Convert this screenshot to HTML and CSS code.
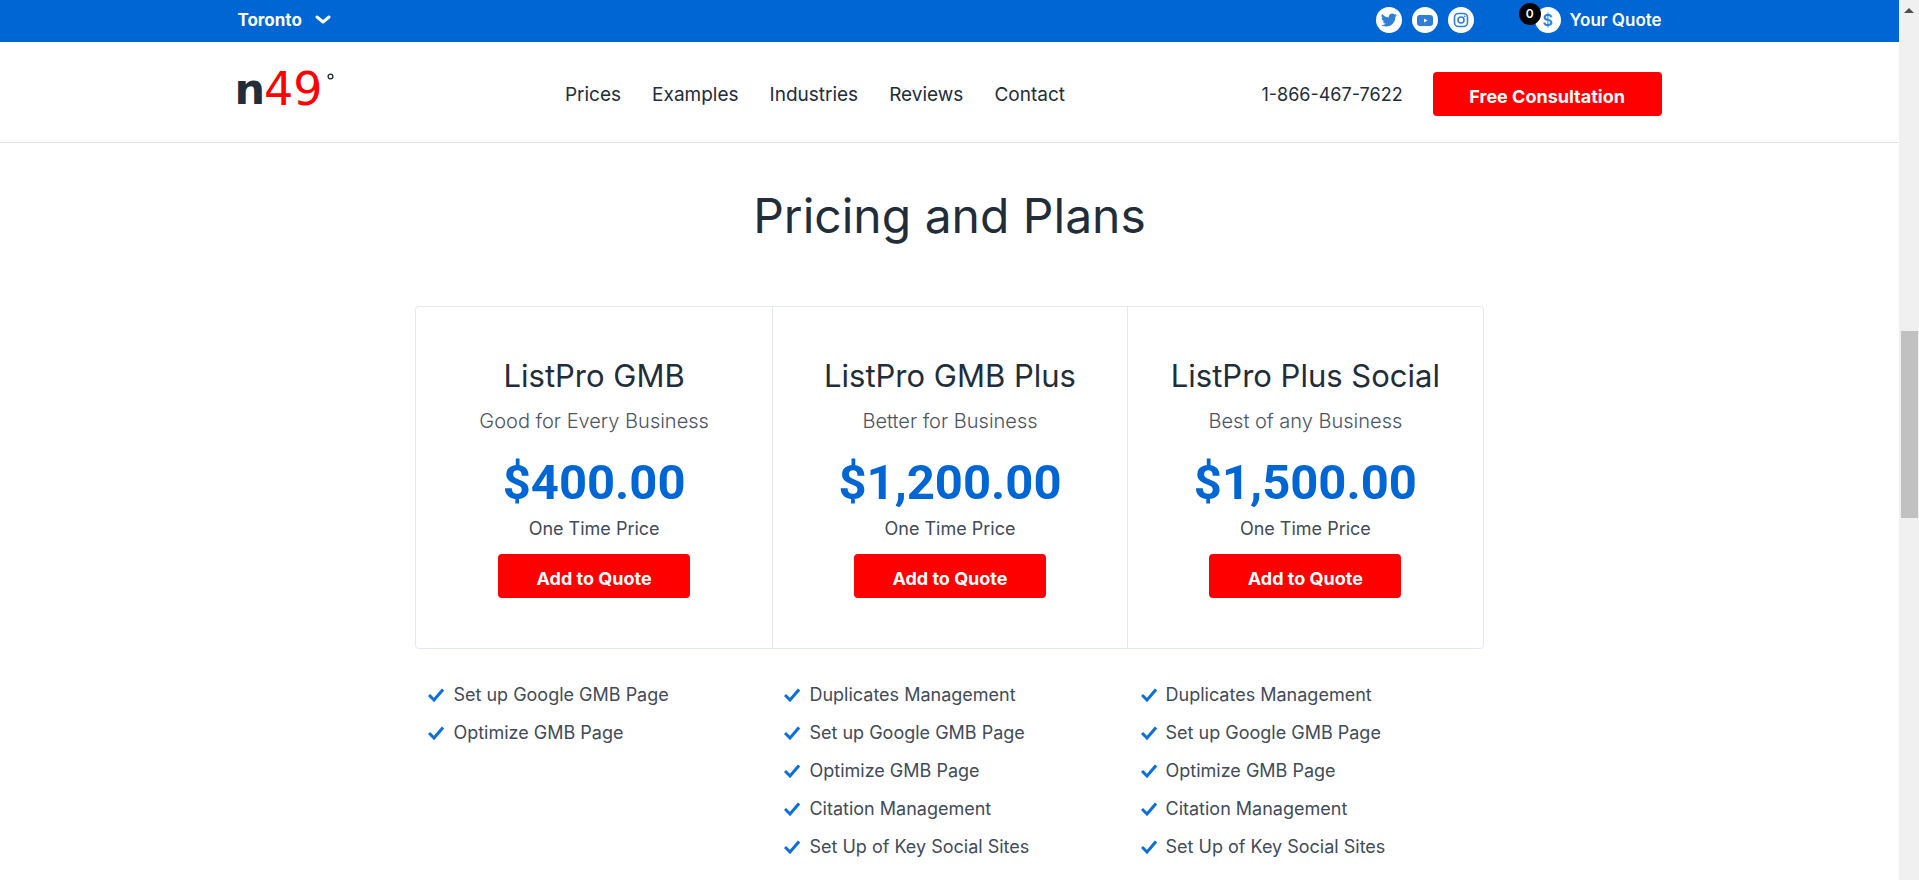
FILE: index.html
```
<!DOCTYPE html>
<html lang="en">
<head>
    <meta charset="utf-8">
    <title>n49 - Pricing and Plans</title>
    <link rel="stylesheet" href="styles.css">
</head>
<body>
    <div class="topbar">
        <div class="container topbar-inner">
            <button class="city-btn" type="button">
                Toronto
                <svg width="16" height="10" viewBox="0 0 16 10"><path d="M2 2l6 5 6-5" fill="none" stroke="#fff" stroke-width="3" stroke-linecap="round" stroke-linejoin="round"/></svg>
            </button>
            <div class="topbar-right">
                <div class="social">
                    <a href="#" aria-label="Twitter">
                        <svg width="16" height="16" viewBox="0 0 24 24"><path fill="#2f7fd8" d="M23.95 4.57a10 10 0 0 1-2.82.77 4.96 4.96 0 0 0 2.16-2.72c-.95.55-2 .95-3.13 1.18a4.92 4.92 0 0 0-8.38 4.48C7.69 8.1 4.07 6.13 1.64 3.16a4.93 4.93 0 0 0 1.52 6.57 4.9 4.9 0 0 1-2.23-.61v.06a4.92 4.92 0 0 0 3.95 4.83 5 5 0 0 1-2.21.08 4.94 4.94 0 0 0 4.6 3.42A9.87 9.87 0 0 1 0 19.54a13.99 13.99 0 0 0 7.55 2.21c9.05 0 14-7.5 14-13.98 0-.21 0-.42-.02-.63a9.94 9.94 0 0 0 2.46-2.55z"/></svg>
                    </a>
                    <a href="#" aria-label="YouTube">
                        <svg width="16" height="16" viewBox="0 0 16 16"><rect x="0" y="3" width="16" height="11" rx="3" fill="#2f7fd8"/><path d="M7 6.500l3.500 2-3.500 2z" fill="#fff"/></svg>
                    </a>
                    <a href="#" aria-label="Instagram">
                        <svg width="16" height="16" viewBox="0 0 16 16" fill="none" stroke="#2f7fd8"><rect x="1.500" y="1.500" width="13" height="13" rx="4" stroke-width="1.600"/><circle cx="8" cy="8" r="3" stroke-width="1.600"/><circle cx="11.700" cy="4.300" r=".6" fill="#2f7fd8" stroke-width=".6"/></svg>
                    </a>
                </div>
                <a class="quote" href="#">
                    <span class="quote-icon">$<span class="quote-count">0</span></span>
                    Your Quote
                </a>
            </div>
        </div>
    </div>

    <header class="header">
        <div class="container header-inner">
            <a class="logo" href="#" aria-label="n49">
                <span class="logo-n">n</span><span class="logo-num">49</span>
                <svg width="7" height="7" viewBox="0 0 7 7"><circle cx="3.500" cy="3.500" r="2.400" fill="none" stroke="#222d3a" stroke-width="1.300"/></svg>
            </a>
            <nav class="nav">
                <a href="#">Prices</a>
                <a href="#">Examples</a>
                <a href="#">Industries</a>
                <a href="#">Reviews</a>
                <a href="#">Contact</a>
            </nav>
            <div class="contact">
                <a class="phone" href="tel:1-866-467-7622">1-866-467-7622</a>
                <button class="btn btn-wide" type="button">Free Consultation</button>
            </div>
        </div>
    </header>

    <main class="container">
        <h1>Pricing and Plans</h1>
        <div class="pricing">
            <div class="plans">
                <section class="plan">
                    <h2>ListPro GMB</h2>
                    <p class="tagline">Good for Every Business</p>
                    <p class="price">$400.00</p>
                    <p class="term">One Time Price</p>
                    <button class="btn" type="button">Add to Quote</button>
                </section>
                <section class="plan">
                    <h2>ListPro GMB Plus</h2>
                    <p class="tagline">Better for Business</p>
                    <p class="price">$1,200.00</p>
                    <p class="term">One Time Price</p>
                    <button class="btn" type="button">Add to Quote</button>
                </section>
                <section class="plan">
                    <h2>ListPro Plus Social</h2>
                    <p class="tagline">Best of any Business</p>
                    <p class="price">$1,500.00</p>
                    <p class="term">One Time Price</p>
                    <button class="btn" type="button">Add to Quote</button>
                </section>
            </div>
            <div class="features">
                <ul>
                    <li><svg class="check" viewBox="0 0 16 14"><use href="#check"/></svg>Set up Google GMB Page</li>
                    <li><svg class="check" viewBox="0 0 16 14"><use href="#check"/></svg>Optimize GMB Page</li>
                </ul>
                <ul>
                    <li><svg class="check" viewBox="0 0 16 14"><use href="#check"/></svg>Duplicates Management</li>
                    <li><svg class="check" viewBox="0 0 16 14"><use href="#check"/></svg>Set up Google GMB Page</li>
                    <li><svg class="check" viewBox="0 0 16 14"><use href="#check"/></svg>Optimize GMB Page</li>
                    <li><svg class="check" viewBox="0 0 16 14"><use href="#check"/></svg>Citation Management</li>
                    <li><svg class="check" viewBox="0 0 16 14"><use href="#check"/></svg>Set Up of Key Social Sites</li>
                </ul>
                <ul>
                    <li><svg class="check" viewBox="0 0 16 14"><use href="#check"/></svg>Duplicates Management</li>
                    <li><svg class="check" viewBox="0 0 16 14"><use href="#check"/></svg>Set up Google GMB Page</li>
                    <li><svg class="check" viewBox="0 0 16 14"><use href="#check"/></svg>Optimize GMB Page</li>
                    <li><svg class="check" viewBox="0 0 16 14"><use href="#check"/></svg>Citation Management</li>
                    <li><svg class="check" viewBox="0 0 16 14"><use href="#check"/></svg>Set Up of Key Social Sites</li>
                </ul>
            </div>
        </div>
    </main>

    <div class="scrollbar">
        <div class="scroll-arrow"></div>
        <div class="scroll-thumb"></div>
    </div>

    <!-- shared tick for the feature lists -->
    <svg class="sprite">
        <symbol id="check" viewBox="0 0 16 14"><path d="M1 7l5 5L15 1.500" fill="none" stroke="#0b6fdc" stroke-width="3"/></symbol>
    </svg>
</body>
</html>
```
FILE: styles.css
```
* {
    box-sizing: border-box;
}
body {
    margin: 0;
    padding-right: 20px;
    font-family: Inter, "Liberation Sans", sans-serif;
    font-size: 18px;
    color: #222d3a;
    background: #fff;
}
a {
    color: inherit;
    text-decoration: none;
}
button {
    font-family: inherit;
    border: none;
    cursor: pointer;
}
.container {
    width: 75%;
    margin: 0 auto;
}

/* top bar */
.topbar {
    background: #0066d3;
    color: #fff;
}
.topbar-inner {
    display: flex;
    justify-content: space-between;
    align-items: center;
    height: 42px;
    padding-bottom: 2px;
}
.city-btn {
    display: flex;
    align-items: center;
    gap: 13px;
    padding: 0;
    background: none;
    color: #fff;
    font-size: 17px;
    font-weight: 700;
}
.topbar-right {
    display: flex;
    gap: 61px;
}
.social {
    display: flex;
    gap: 10px;
}
.social a,
.quote-icon {
    display: flex;
    align-items: center;
    justify-content: center;
    width: 26px;
    height: 26px;
    border-radius: 50%;
    background: #fff;
}
.quote {
    display: flex;
    align-items: center;
    gap: 9px;
    font-size: 17px;
    font-weight: 600;
}
.quote-icon {
    position: relative;
    color: #2f7fd8;
    font-size: 16px;
}
.quote-count {
    position: absolute;
    left: -16px;
    top: -4px;
    width: 22px;
    height: 22px;
    border-radius: 50%;
    background: #000;
    color: #fff;
    font-size: 12px;
    line-height: 22px;
    text-align: center;
}

/* header */
.header {
    border-bottom: 1px solid #e5e5e5;
}
.header-inner {
    display: grid;
    grid-template-columns: 23% auto 1fr;
    align-items: center;
    height: 100px;
    padding-top: 4px;
}
.logo {
    display: flex;
    align-items: flex-start;
    padding-bottom: 10px;
    font-family: "DejaVu Sans", sans-serif;
    line-height: 52px;
}
.logo svg {
    margin: 10px 0 0 4px;
}
.logo-n {
    margin-left: -3px;
    font-size: 43px;
    font-weight: 700;
}
.logo-num {
    margin-left: -1px;
    color: #f00;
    font-size: 46px;
}
.nav {
    display: flex;
    gap: 31px;
    font-size: 19px;
}
.contact {
    display: flex;
    justify-content: flex-end;
    align-items: center;
    gap: 30px;
}
.btn {
    width: 192px;
    height: 44px;
    padding: 4px 0 0;
    border-radius: 4px;
    background: #f00;
    color: #fff;
    font-size: 18px;
    font-weight: 700;
}
.btn-wide {
    width: 229px;
}

/* pricing */
h1 {
    margin: 41px 0 58px;
    font-size: 48px;
    font-weight: 400;
    line-height: 64px;
    text-align: center;
}
.pricing {
    width: 75%;
    margin: 0 auto;
}
.plans {
    display: grid;
    grid-template-columns: repeat(3, 1fr);
    border: 1px solid #e4e8f1;
    border-radius: 4px;
}
.plan {
    padding: 49px 0 50px;
    text-align: center;
}
.plan + .plan {
    border-left: 1px solid #e4e8f1;
}
.plan h2 {
    margin: 0;
    font-size: 31px;
    font-weight: 400;
    line-height: 40px;
}
.plan p {
    margin: 0;
}
.tagline {
    padding-top: 9px;
    color: #4a5463;
    font-size: 20px;
    font-weight: 300;
    line-height: 32px;
}
.price {
    padding-top: 15px;
    color: #0066d3;
    font-family: Roboto, "Liberation Sans", sans-serif;
    font-size: 49px;
    font-weight: 700;
    line-height: 62px;
}
.term {
    padding-bottom: 10px;
    color: #414b59;
    line-height: 30px;
}
.features {
    display: grid;
    grid-template-columns: repeat(3, 1fr);
    margin-top: 27px;
    color: #414b59;
}
.features ul {
    margin: 0;
    padding: 0 0 0 13px;
    list-style: none;
}
.features li {
    display: flex;
    align-items: center;
    gap: 9px;
    line-height: 38px;
}
.check {
    width: 16px;
    height: 14px;
}
.sprite {
    display: none;
}

/* scrollbar */
.scrollbar {
    position: fixed;
    top: 0;
    right: 0;
    bottom: 0;
    width: 20px;
    background: #f0f0f0;
}
.scroll-arrow {
    width: 0;
    margin: 8px auto 0;
    border: 5px solid transparent;
    border-top: 0;
    border-bottom-color: #505050;
}
.scroll-thumb {
    width: 17px;
    height: 187px;
    margin: 318px auto 0;
    background: #c1c1c1;
}
```
